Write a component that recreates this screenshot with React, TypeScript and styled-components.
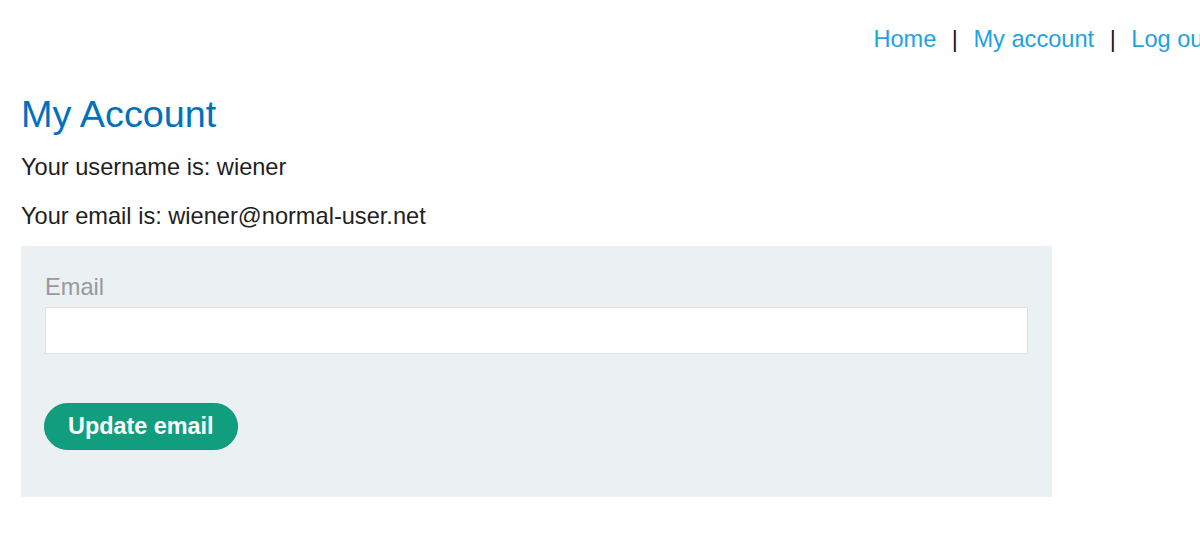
import styled, { createGlobalStyle } from "styled-components";

const Global = createGlobalStyle`
  html, body {
    margin: 0;
    padding: 0;
    overflow: hidden;
    background: #fff;
  }

  body {
    font-family: "Liberation Sans", Arial, sans-serif;
    font-size: 23.6px;
    line-height: 27px;
    color: #1f1f1f;
  }
`;

const links = ["Home", "My account", "Log out"];

export default function App() {
  return (
    <>
      <Global />
      <S.Header>
        {links.map((label, i) => (
          <S.NavItem key={label}>
            {i > 0 && <S.Pipe>|</S.Pipe>}
            <S.NavLink href="#">{label}</S.NavLink>
          </S.NavItem>
        ))}
      </S.Header>
      <S.Main>
        <S.Title>My Account</S.Title>
        <S.Line $gap={22}>Your username is: wiener</S.Line>
        <S.Line $gap={16}>Your email is: wiener@normal-user.net</S.Line>
        <S.Form onSubmit={(e) => e.preventDefault()}>
          <S.Label htmlFor="email">Email</S.Label>
          <S.Input id="email" name="email" type="email" />
          <S.Button type="submit">Update email</S.Button>
        </S.Form>
      </S.Main>
    </>
  );
}

const S = {
  Header: styled.nav`
    display: flex;
    justify-content: flex-end;
    align-items: baseline;

    margin-right: -10px;
    padding-top: 26px;

    white-space: nowrap;
  `,

  NavItem: styled.span`
    display: flex;
    align-items: baseline;
  `,

  Pipe: styled.span`
    margin: 0 15.5px;
    color: #1a1a1a;
  `,

  NavLink: styled.a`
    color: #1fa2e0;
    text-decoration: none;
  `,

  Main: styled.main`
    padding: 0 21px;
  `,

  Title: styled.h1`
    margin: 40px 0 18px;

    font-size: 37.8px;
    font-weight: 400;
    line-height: 43px;
    color: #0071bc;
  `,

  Line: styled.p<{ $gap: number }>`
    margin: 0 0 ${(p) => p.$gap}px;
  `,

  Form: styled.form`
    display: flex;
    flex-direction: column;
    align-items: flex-start;

    max-width: 1031px;
    padding: 28px 24px 47px;
    box-sizing: border-box;

    background: #ebf0f2;
  `,

  Label: styled.label`
    margin-bottom: 6px;
    color: #999;
  `,

  Input: styled.input`
    width: 100%;
    height: 47px;
    margin: 0 0 49px;
    padding: 0 10px;
    box-sizing: border-box;

    font: inherit;
    border: 1px solid #e3e1e1;
    border-radius: 0;
    background: #fff;
    outline: none;
  `,

  Button: styled.button`
    height: 47px;
    margin-left: -1px;
    padding: 0 23px;

    font-family: inherit;
    font-size: 23.4px;
    font-weight: 700;
    color: #fff;

    background: #119e7e;
    border: 1px solid #10967a;
    border-radius: 24px;
    cursor: pointer;
  `,
};
